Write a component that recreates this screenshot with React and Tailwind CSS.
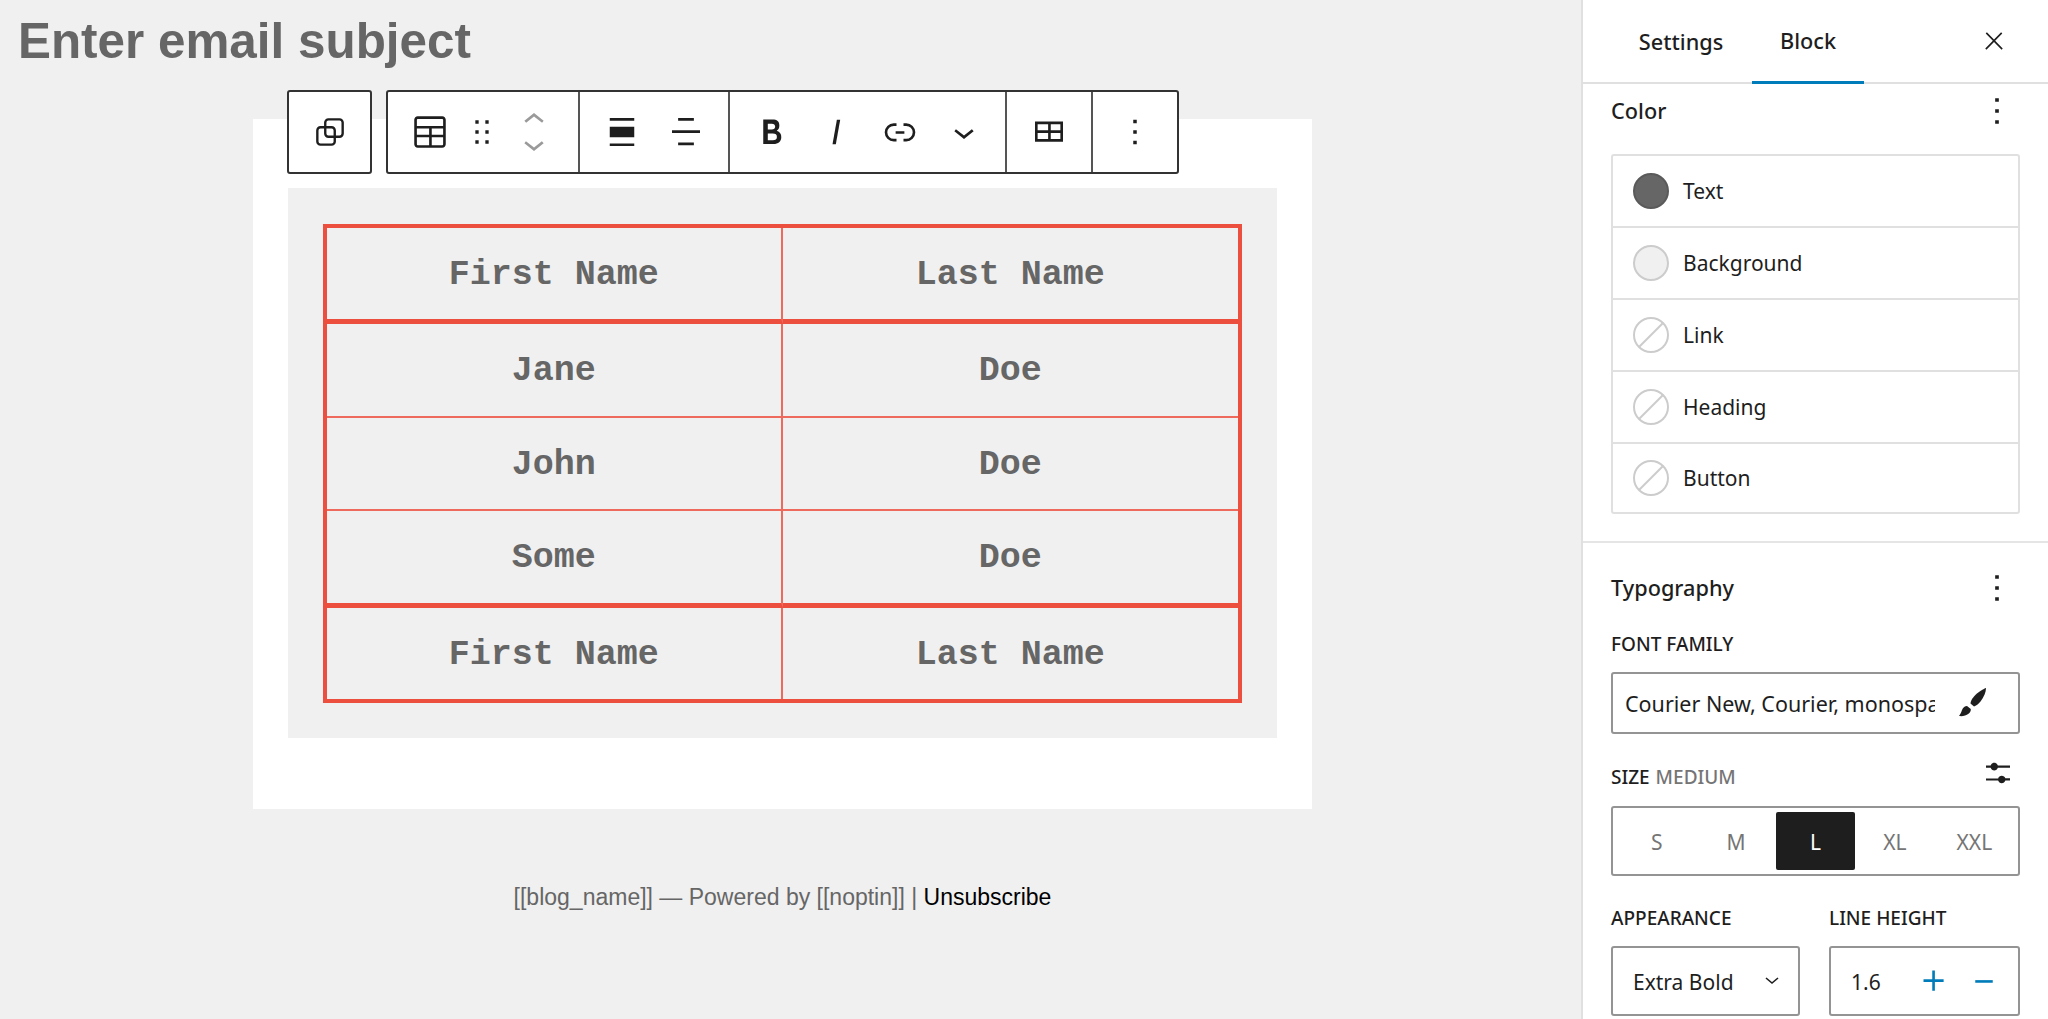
import { useState } from 'react';

const uiFont = "font-['Noto_Sans',sans-serif]";

const Icon = ({ d, className = 'w-[42px] h-[42px]' }) => (
  <svg viewBox="0 0 24 24" fill="currentColor" className={className}>
    <path d={d} />
  </svg>
);

const icons = {
  table: 'M19 3H5c-1.1 0-2 .9-2 2v14c0 1.1.9 2 2 2h14c1.1 0 2-.9 2-2V5c0-1.1-.9-2-2-2zM5 4.5h14c.3 0 .5.2.5.5v3.5h-15V5c0-.3.2-.5.5-.5zm8 5.5h6.5v3.5H13V10zm-1.5 3.5h-7V10h7v3.5zm-7 5.5v-4h7v4.5H5c-.3 0-.5-.2-.5-.5zm14.5.5h-6V15h6.5v4c0 .3-.2.5-.5.5z',
  drag: 'M8 7h2V5H8v2zm0 6h2v-2H8v2zm0 6h2v-2H8v2zm6-14v2h2V5h-2zm0 8h2v-2h-2v2zm0 6h2v-2h-2v2z',
  up: 'M6.5 12.4L12 8l5.5 4.4-.9 1.2L12 10l-4.5 3.6-1-1.2z',
  down: 'M17.5 11.6L12 16l-5.5-4.4.9-1.2L12 14l4.5-3.6 1 1.2z',
  wide: 'M5 5.5h14V4H5v1.5zM5 20h14v-1.5H5V20zM5 9h14v6H5V9z',
  center: 'M7.5 5.5h9V4h-9v1.5Zm-3.5 7h16V11H4v1.5Zm3.5 7h9V18h-9v1.5Z',
  bold: 'M14.7 11.3c1-.6 1.5-1.6 1.5-3 0-2.3-1.3-3.4-4-3.4H7v14h5.8c1.4 0 2.5-.3 3.3-1 .8-.7 1.2-1.7 1.2-2.9.1-1.9-.8-3.1-2.6-3.7zm-5.1-4h2.3c.6 0 1.1.1 1.4.4.3.3.5.7.5 1.2s-.2 1-.5 1.2c-.3.3-.8.4-1.4.4H9.6V7.3zm4.6 9c-.4.3-1 .4-1.7.4H9.6v-3.9h2.9c.7 0 1.3.2 1.7.5.4.3.6.8.6 1.5s-.2 1.2-.6 1.5z',
  italic: 'M12.5 5L10 19h1.9l2.5-14z',
  link: 'M10 17.389H8.444A5.194 5.194 0 1 1 8.444 7H10v1.5H8.444a3.694 3.694 0 0 0 0 7.389H10v1.5ZM14 7h1.556a5.194 5.194 0 0 1 0 10.39H14v-1.5h1.556a3.694 3.694 0 0 0 0-7.39H14V7Zm-4.5 6h5v-1.5h-5V13Z',
  tableEdit: 'M4 6v11.5h16V6H4zm1.5 1.5h6V11h-6V7.5zm0 8.5v-3.5h6V16h-6zm13 0H13v-3.5h5.5V16zM13 11V7.5h5.5V11H13z',
  dots: 'M13 19h-2v-2h2v2zm0-6h-2v-2h2v2zm0-6h-2V5h2v2z',
  close: 'M13 11.8l6.1-6.3-1-1-6.1 6.2-6.1-6.2-1 1 6.1 6.3-6.5 6.7 1 1 6.5-6.6 6.5 6.6 1-1z',
  sliders: 'M14.5 13.8c-1.1 0-2.1.7-2.4 1.8H4V17h8.1c.3 1 1.3 1.8 2.4 1.8s2.1-.7 2.4-1.8H20v-1.5h-3.1c-.3-1-1.3-1.7-2.4-1.7zM11.9 7c-.3-1-1.3-1.8-2.4-1.8S7.4 6 7.1 7H4v1.5h3.1c.3 1 1.3 1.8 2.4 1.8s2.1-.7 2.4-1.8H20V7h-8.1z',
  plus: 'M11 12.5V17.5H12.5V12.5H17.5V11H12.5V6H11V11H6V12.5H11Z',
  minus: 'M7 11.5h10V13H7z',
};

const ToolButton = ({ d, className = 'w-[64px]', iconClass }) => (
  <button className={`${className} h-full flex items-center justify-center text-[#1e1e1e]`}>
    <Icon d={d} className={iconClass} />
  </button>
);

const Toolbar = () => (
  <div className="absolute left-[287px] top-[90px] flex gap-[14px] h-[84px]">
    <div className="w-[85px] h-full bg-white border-2 border-[#333333] rounded-[3px] flex items-center justify-center text-[#1e1e1e]">
      <svg viewBox="0 0 24 24" fill="none" stroke="currentColor" strokeWidth="1.5" className="w-[38px] h-[38px]">
        <rect x="9" y="4" width="11" height="11" rx="2" />
        <rect x="4" y="9" width="11" height="11" rx="2" />
      </svg>
    </div>
    <div className="h-full bg-white border-2 border-[#333333] rounded-[3px] flex text-[#1e1e1e]">
      <div className="w-[190px] pl-[10px] flex items-center shrink-0">
        <ToolButton d={icons.table} />
        <ToolButton d={icons.drag} className="w-[40px]" />
        <div className="w-[64px] h-full flex flex-col items-center justify-center text-[#9a9a9a]">
          <Icon d={icons.up} />
          <Icon d={icons.down} className="w-[42px] h-[42px] -mt-[18px]" />
        </div>
      </div>
      <div className="w-[150px] pl-[10px] flex border-l-2 border-[#555555] shrink-0">
        <ToolButton d={icons.wide} />
        <ToolButton d={icons.center} />
      </div>
      <div className="w-[277px] pl-[10px] flex border-l-2 border-[#555555] shrink-0">
        <ToolButton d={icons.bold} />
        <ToolButton d={icons.italic} />
        <ToolButton d={icons.link} />
        <ToolButton d={icons.down} />
      </div>
      <div className="w-[86px] pl-[10px] flex border-l-2 border-[#555555] shrink-0">
        <ToolButton d={icons.tableEdit} />
      </div>
      <div className="w-[86px] pl-[10px] flex border-l-2 border-[#555555] shrink-0">
        <ToolButton d={icons.dots} />
      </div>
    </div>
  </div>
);

const rows = [
  { a: 'First Name', b: 'Last Name', h: 'h-[96px]', border: 'border-b-[5px] border-[#ec4f3e]' },
  { a: 'Jane', b: 'Doe', h: 'h-[94px]', border: 'border-b-[2px] border-[#ee6a5c]' },
  { a: 'John', b: 'Doe', h: 'h-[93px]', border: 'border-b-[2px] border-[#ee6a5c]' },
  { a: 'Some', b: 'Doe', h: 'h-[97px]', border: 'border-b-[5px] border-[#ec4f3e]' },
  { a: 'First Name', b: 'Last Name', h: 'h-[91px]', border: '' },
];

const EmailTable = () => (
  <table className="w-full table-fixed border-separate border-spacing-0 border-[4px] border-[#ec4f3e] font-['Liberation_Mono',monospace] font-bold text-[35px] text-[#666666]">
    <tbody>
      {rows.map((row, index) => (
        <tr key={index}>
          <td className={`${row.h} ${row.border} border-r-[2px] border-r-[#ee6a5c] text-center p-0 pt-[3px]`}>{row.a}</td>
          <td className={`${row.h} ${row.border} text-center p-0 pt-[3px]`}>{row.b}</td>
        </tr>
      ))}
    </tbody>
  </table>
);

const colorRows = [
  { label: 'Text', swatch: 'bg-[#666666] border-[#5a5a5a]', h: 'h-[70px]' },
  { label: 'Background', swatch: 'bg-[#f0f0f0] border-[#cccccc]', h: 'h-[72px] border-t-2 border-[#e0e0e0]' },
  { label: 'Link', h: 'h-[72px] border-t-2 border-[#e0e0e0]' },
  { label: 'Heading', h: 'h-[72px] border-t-2 border-[#e0e0e0]' },
  { label: 'Button', h: 'h-[70px] border-t-2 border-[#e0e0e0]' },
];

const Swatch = ({ swatch }) => {
  if (swatch) {
    return <span className={`w-[36px] h-[36px] rounded-full border-2 ${swatch}`} />;
  }
  return (
    <svg viewBox="0 0 36 36" fill="none" stroke="#cccccc" strokeWidth="2" className="w-[36px] h-[36px]">
      <circle cx="18" cy="18" r="17" />
      <path d="M6 30L30 6" />
    </svg>
  );
};

const sizes = ['S', 'M', 'L', 'XL', 'XXL'];

const Sidebar = () => {
  const [size, setSize] = useState('L');
  return (
    <aside className={`w-[467px] h-full shrink-0 bg-white border-l-2 border-[#e0e0e0] flex flex-col overflow-hidden text-[#1e1e1e] ${uiFont}`}>
      <div className="h-[84px] shrink-0 border-b-2 border-[#e0e0e0] flex items-stretch relative pl-[27px]">
        <div className="w-[142px] flex items-center justify-center text-[21.700px] font-medium pt-[2px]">Settings</div>
        <div className="w-[112px] flex items-center justify-center text-[21.700px] font-medium border-b-[3px] border-[#007cba] -mb-[2px] pt-[2px]">Block</div>
        <button className="absolute right-[40px] top-[27px]">
          <Icon d={icons.close} className="w-[28px] h-[28px]" />
        </button>
      </div>

      <div className="px-[28px] pt-[8px] pb-[27px] border-b-2 border-[#e5e5e5]">
        <div className="flex items-center justify-between h-[38px] mb-[24px]">
          <h2 className="text-[21.700px] font-medium">Color</h2>
          <Icon d={icons.dots} className="w-[44px] h-[44px] mr-[1px]" />
        </div>
        <div className="border-2 border-[#e0e0e0] rounded-[3px]">
          {colorRows.map((row) => (
            <div key={row.label} className={`${row.h} px-[20px] flex items-center gap-[14px] text-[21px]`}>
              <Swatch swatch={row.swatch} />
              <span className="pt-[2px]">{row.label}</span>
            </div>
          ))}
        </div>
      </div>

      <div className="px-[28px] pt-[24px]">
        <div className="flex items-center justify-between h-[42px]">
          <h2 className="text-[21.700px] font-medium">Typography</h2>
          <Icon d={icons.dots} className="w-[44px] h-[44px] mr-[1px]" />
        </div>
        <div className="mt-[23px] text-[19px] font-medium leading-[24px]">FONT FAMILY</div>
        <div className="mt-[16px] h-[62px] border-2 border-[#949494] rounded-[3px] flex items-center pl-[12px] pr-[30px]">
          <span className="w-[310px] overflow-hidden whitespace-nowrap text-[21.500px] pt-[3px]">Courier New, Courier, monospace</span>
          <svg viewBox="0 0 30 30" fill="currentColor" className="w-[30px] h-[30px] ml-auto">
            <path d="M28 0c-2 .6-8 4-12 8.500-2 2.300-3.500 5-3.500 7l3.500 3c2-.6 4.500-2.500 6.500-5C26 9 28 4 28 0z" />
            <path d="M9 18c-2 0-4 1.500-5 4-.6 2-1.500 4-3 6 3.500.5 7-.3 9.500-2.200 1.800-1.400 2.500-3 2.300-4.800z" />
          </svg>
        </div>

        <div className="mt-[28px] flex items-center justify-between h-[30px]">
          <div className="text-[19px] font-medium">SIZE <span className="text-[#757575] ml-[1px]">MEDIUM</span></div>
          <Icon d={icons.sliders} className="w-[36px] h-[36px] -mt-[8px] mr-[4px]" />
        </div>
        <div className="mt-[14px] h-[70px] border-2 border-[#949494] rounded-[3px] px-[4px] flex items-center text-[21px]">
          {sizes.map((item) => (
            <button
              key={item}
              onClick={() => setSize(item)}
              className={`flex-1 h-[58px] rounded-[2px] pt-[3px] ${size === item ? 'bg-[#1e1e1e] text-white' : 'text-[#757575]'}`}
            >
              {item}
            </button>
          ))}
        </div>

        <div className="mt-[30px] flex gap-[29px]">
          <div className="w-[189px] shrink-0">
            <div className="text-[19px] font-medium leading-[24px]">APPEARANCE</div>
            <div className="mt-[16px] h-[70px] border-2 border-[#949494] rounded-[3px] pl-[20px] pr-[18px] flex items-center justify-between text-[21px]">
              <span className="pt-[3px]">Extra Bold</span>
              <svg viewBox="0 0 16 16" fill="none" stroke="currentColor" strokeWidth="1.600" className="w-[16px] h-[16px]">
                <path d="M2 5l6 5 6-5" />
              </svg>
            </div>
          </div>
          <div className="flex-1">
            <div className="text-[19px] font-medium leading-[24px]">LINE HEIGHT</div>
            <div className="mt-[16px] h-[70px] border-2 border-[#949494] rounded-[3px] pl-[20px] pr-[13px] flex items-center text-[21px]">
              <span className="pt-[3px]">1.6</span>
              <Icon d={icons.plus} className="w-[42px] h-[42px] ml-auto text-[#007cba]" />
              <Icon d={icons.minus} className="w-[42px] h-[42px] ml-[8px] text-[#007cba]" />
            </div>
          </div>
        </div>
      </div>
    </aside>
  );
};

export default function App() {
  return (
    <div className="w-[2048px] h-[1019px] flex overflow-hidden bg-[#f0f0f0]">
      <main className="flex-1 relative font-['Liberation_Sans',sans-serif]">
        <div className="h-[119px] pt-[10px] pl-[18px]">
          <h1 className="text-[49.400px] leading-[62px] font-bold text-[#666666]">Enter email subject</h1>
        </div>
        <div className="ml-[253px] w-[1059px] h-[690px] bg-white px-[35px] pt-[69px]">
          <div className="h-[550px] bg-[#f0f0f0] p-[35px] pt-[36px]">
            <EmailTable />
          </div>
        </div>
        <p className="ml-[253px] w-[1059px] mt-[73px] text-center text-[23px] leading-[30px] text-[#666666]">
          [[blog_name]] — Powered by [[noptin]] | <a className="text-black">Unsubscribe</a>
        </p>
        <Toolbar />
      </main>
      <Sidebar />
    </div>
  );
}
